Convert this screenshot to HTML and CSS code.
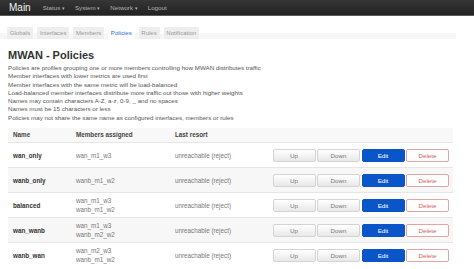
FILE: index.html
```html
<!DOCTYPE html>
<html>
<head>
<meta charset="utf-8">
<link rel="stylesheet" href="styles.css">
</head>
<body>
<header class="topbar">
  <span class="brand">Main</span>
  <nav class="nav">
    <span class="nav-item">Status <span class="caret">▾</span></span>
    <span class="nav-item">System <span class="caret">▾</span></span>
    <span class="nav-item">Network <span class="caret">▾</span></span>
    <span class="nav-item">Logout</span>
  </nav>
</header>
<div class="tabbar">
  <span class="tab">Globals</span>
  <span class="tab">Interfaces</span>
  <span class="tab">Members</span>
  <span class="tab active">Policies</span>
  <span class="tab">Rules</span>
  <span class="tab">Notification</span>
</div>
<main class="content">
  <h2 class="title">MWAN - Policies</h2>
  <div class="desc">
    <div>Policies are profiles grouping one or more members controlling how MWAN distributes traffic</div>
    <div>Member interfaces with lower metrics are used first</div>
    <div>Member interfaces with the same metric will be load-balanced</div>
    <div>Load-balanced member interfaces distribute more traffic out those with higher weights</div>
    <div>Names may contain characters A-Z, a-z, 0-9, _ and no spaces</div>
    <div>Names must be 15 characters or less</div>
    <div>Policies may not share the same name as configured interfaces, members or rules</div>
  </div>
  <table class="tbl">
    <thead>
      <tr class="head">
        <th class="c-name">Name</th>
        <th class="c-mem">Members assigned</th>
        <th class="c-last">Last resort</th>
        <th class="c-act"></th>
      </tr>
    </thead>
    <tbody>
      <tr>
        <td class="c-name name">wan_only</td>
        <td class="c-mem">wan_m1_w3</td>
        <td class="c-last">unreachable (reject)</td>
        <td class="c-act"><div class="btns"><span class="btn">Up</span><span class="btn">Down</span><span class="btn edit">Edit</span><span class="btn del">Delete</span></div></td>
      </tr>
      <tr class="alt">
        <td class="c-name name">wanb_only</td>
        <td class="c-mem">wanb_m1_w2</td>
        <td class="c-last">unreachable (reject)</td>
        <td class="c-act"><div class="btns"><span class="btn">Up</span><span class="btn">Down</span><span class="btn edit">Edit</span><span class="btn del">Delete</span></div></td>
      </tr>
      <tr>
        <td class="c-name name">balanced</td>
        <td class="c-mem">wan_m1_w3<br>wanb_m1_w2</td>
        <td class="c-last">unreachable (reject)</td>
        <td class="c-act"><div class="btns"><span class="btn">Up</span><span class="btn">Down</span><span class="btn edit">Edit</span><span class="btn del">Delete</span></div></td>
      </tr>
      <tr class="alt">
        <td class="c-name name">wan_wanb</td>
        <td class="c-mem">wan_m1_w3<br>wanb_m2_w2</td>
        <td class="c-last">unreachable (reject)</td>
        <td class="c-act"><div class="btns"><span class="btn">Up</span><span class="btn">Down</span><span class="btn edit">Edit</span><span class="btn del">Delete</span></div></td>
      </tr>
      <tr>
        <td class="c-name name">wanb_wan</td>
        <td class="c-mem">wan_m2_w3<br>wanb_m1_w2</td>
        <td class="c-last">unreachable (reject)</td>
        <td class="c-act"><div class="btns"><span class="btn">Up</span><span class="btn">Down</span><span class="btn edit">Edit</span><span class="btn del">Delete</span></div></td>
      </tr>
    </tbody>
  </table>
</main>
</body>
</html>
```

FILE: styles.css
```css
html, body {
  margin: 0;
  padding: 0;
  background: #fff;
  font-family: "Liberation Sans", Arial, sans-serif;
  overflow: hidden;
}

.topbar {
  height: 15px;
  background: linear-gradient(to bottom, #363636, #222);
  border-bottom: 1px solid #5a5a5a;
  display: flex;
  align-items: center;
  padding-left: 9px;
}

.brand {
  color: #f2f2f2;
  font-size: 10px;
  line-height: 15px;
}

.nav {
  display: flex;
  gap: 10px;
  margin-left: 12px;
}

.nav-item {
  color: #b5b5b5;
  font-size: 6.2px;
  line-height: 15px;
}

.caret {
  font-size: 5px;
}

.tabbar {
  margin-top: 11px;
  width: 449px;
  padding-left: 7px;
  height: 12px;
  display: flex;
  gap: 4px;
  background: linear-gradient(to bottom, rgba(255,255,255,0) 50%, #f6f6f6 55%, #f6f6f6 100%);
}

.tab {
  background: #eeeeee;
  color: #9a9a9a;
  font-size: 6.05px;
  line-height: 12px;
  padding: 0 2.8px;
  border-radius: 1px;
}

.tab.active {
  background: #fff;
  color: #2a6fd0;
}

.content {
  padding: 0 8px;
}

.title {
  margin: 10px 0 2px;
  font-size: 11px;
  line-height: 13px;
  font-weight: bold;
  color: #333;
}

.desc {
  font-size: 6.2px;
  line-height: 8.3px;
  color: #555;
}

.tbl {
  margin-top: 6px;
  width: 445px;
  border-collapse: collapse;
  font-size: 6.3px;
  color: #333;
}

.tbl th, .tbl td {
  text-align: left;
  padding: 0;
  vertical-align: middle;
}

.head {
  background: #f8f8f8;
  height: 14px;
}

.head th {
  font-weight: bold;
  color: #444;
  line-height: 14px;
}

.tbl tbody tr {
  height: 25px;
  border-top: 1px solid #e6e6e6;
}

.tbl tbody tr.alt {
  background: #f7f7f7;
}

.c-name {
  width: 63px;
  padding-left: 5px !important;
}

.name {
  font-weight: bold;
  color: #333;
}

.c-mem {
  width: 99px;
  color: #777;
  line-height: 9px;
}

.c-last {
  width: 95px;
  color: #777;
}

.c-act {
  padding-right: 4px !important;
}

.btns {
  display: flex;
  justify-content: flex-end;
  gap: 1.5px;
}

.btn {
  width: 41px;
  height: 11px;
  line-height: 11px;
  text-align: center;
  font-size: 6.2px;
  color: #777;
  border: 1px solid #d4d4d4;
  border-radius: 2px;
  background: linear-gradient(to bottom, #ffffff, #e8e8e8);
}

.btn.edit {
  background: #0a56c8;
  border-color: #0a56c8;
  color: #fff;
}

.btn.del {
  background: #fff;
  border-color: #e3a4a4;
  color: #d06060;
}
```
